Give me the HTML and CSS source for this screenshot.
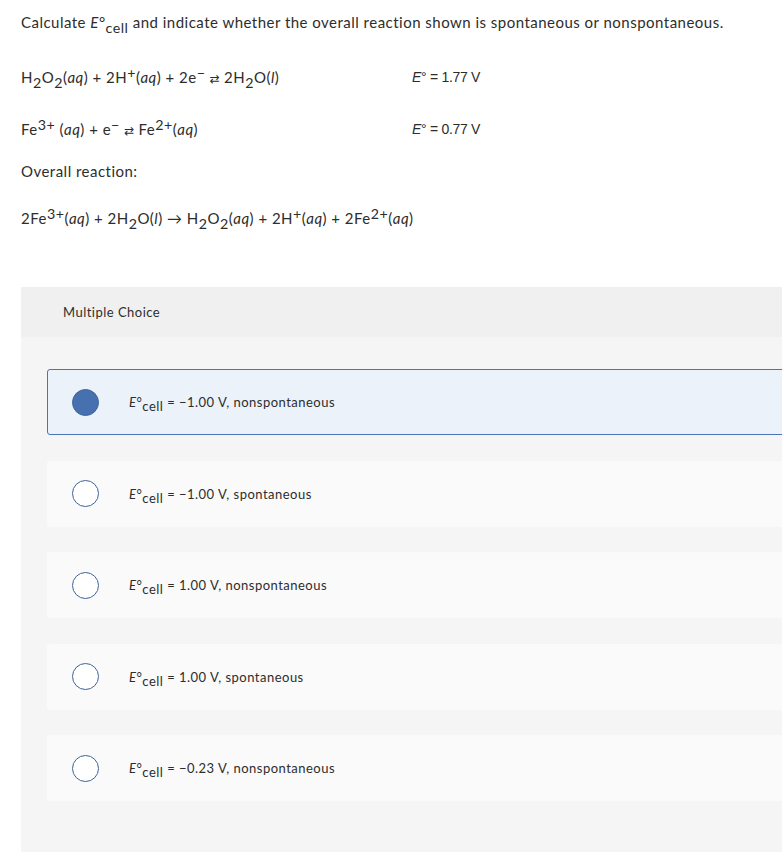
FILE: index.html
```html
<!DOCTYPE html>
<html>
<head>
  <link rel="stylesheet" href="styles.css">
</head>
<body>
  <div class="question">
    <p class="prompt">Calculate <i>E</i>°<sub>cell</sub> and indicate whether the overall reaction shown is spontaneous or nonspontaneous.</p>

    <div class="half-row first">
      <div class="equation">H<sub>2</sub>O<sub>2</sub>(<i>aq</i>) + 2H<sup>+</sup>(<i>aq</i>) + 2e<sup>−</sup> <span class="eq-arrow">⇄</span> 2H<sub>2</sub>O(<i>l</i>)</div>
      <div class="potential"><i>E</i>° = 1.77 V</div>
    </div>

    <div class="half-row">
      <div class="equation">Fe<sup>3+</sup> (<i>aq</i>) + e<sup>−</sup> <span class="eq-arrow">⇄</span> Fe<sup>2+</sup>(<i>aq</i>)</div>
      <div class="potential"><i>E</i>° = 0.77 V</div>
    </div>

    <p class="label">Overall reaction:</p>

    <div class="equation overall">2Fe<sup>3+</sup>(<i>aq</i>) + 2H<sub>2</sub>O(<i>l</i>) → H<sub>2</sub>O<sub>2</sub>(<i>aq</i>) + 2H<sup>+</sup>(<i>aq</i>) + 2Fe<sup>2+</sup>(<i>aq</i>)</div>
  </div>

  <div class="choice-panel">
    <div class="choice-header">Multiple Choice</div>
    <div class="choice-list">
      <div class="choice selected">
        <span class="radio"></span>
        <span class="choice-text"><i>E</i>°<sub>cell</sub> = −1.00 V, nonspontaneous</span>
      </div>
      <div class="choice">
        <span class="radio"></span>
        <span class="choice-text"><i>E</i>°<sub>cell</sub> = −1.00 V, spontaneous</span>
      </div>
      <div class="choice">
        <span class="radio"></span>
        <span class="choice-text"><i>E</i>°<sub>cell</sub> = 1.00 V, nonspontaneous</span>
      </div>
      <div class="choice">
        <span class="radio"></span>
        <span class="choice-text"><i>E</i>°<sub>cell</sub> = 1.00 V, spontaneous</span>
      </div>
      <div class="choice">
        <span class="radio"></span>
        <span class="choice-text"><i>E</i>°<sub>cell</sub> = −0.23 V, nonspontaneous</span>
      </div>
    </div>
  </div>
</body>
</html>
```

FILE: styles.css
```css
body {
  font-family: Lato, 'Noto Sans', sans-serif;
  margin: 0;
  padding: 0;
  color: #2d2d2d;
  letter-spacing: 0.03em;
  overflow-x: hidden;
  background: #fff;
}

.question {
  padding: 12px 0 0 21px;
}

p {
  margin: 0;
}

.prompt {
  font-size: 15px;
  line-height: 20px;
}

sub {
  font-size: 0.95em;
  vertical-align: -5px;
  line-height: 0;
}

sup {
  font-size: 0.95em;
  vertical-align: 5px;
  line-height: 0;
}

.half-row {
  display: flex;
  margin-top: 30px;
}

.half-row.first {
  margin-top: 35px;
}

.equation {
  font-size: 15px;
  line-height: 20px;
}

.half-row .equation {
  width: 391px;
}

.eq-arrow {
  font-family: 'DejaVu Sans', sans-serif;
  font-size: 12px;
  letter-spacing: 0;
}

.potential {
  font-family: 'Liberation Sans', Arial, sans-serif;
  font-size: 14px;
  line-height: 20px;
  letter-spacing: -0.3px;
}

.label {
  font-size: 15px;
  line-height: 20px;
  margin-top: 20px;
}

.overall {
  margin-top: 27px;
}

.choice-panel {
  margin: 59px 0 0 21px;
  width: 800px;
  background: #f5f5f5;
  min-height: 580px;
}

.choice-header {
  background: #f0f0f0;
  height: 50px;
  display: flex;
  align-items: center;
  padding-left: 42px;
  font-size: 13px;
}

.choice-list {
  display: flex;
  flex-direction: column;
  gap: 25.5px;
  padding: 32px 0 0 26px;
}

.choice {
  display: flex;
  align-items: center;
  height: 66px;
  background: #fafafa;
  border-radius: 3px;
  padding-left: 25px;
  font-size: 13px;
}

.choice.selected {
  background: #ebf2fa;
  border: 1px solid #4a74b5;
  height: 64px;
  padding-left: 24px;
}

.radio {
  width: 25px;
  height: 25px;
  border: 1.5px solid #3f6499;
  border-radius: 50%;
  margin-right: 30px;
  background: #fff;
  flex-shrink: 0;
}

.selected .radio {
  background: #4670b0;
  border-color: #3f6499;
}

.choice-text sub {
  vertical-align: -4px;
  font-size: 1em;
}
```
